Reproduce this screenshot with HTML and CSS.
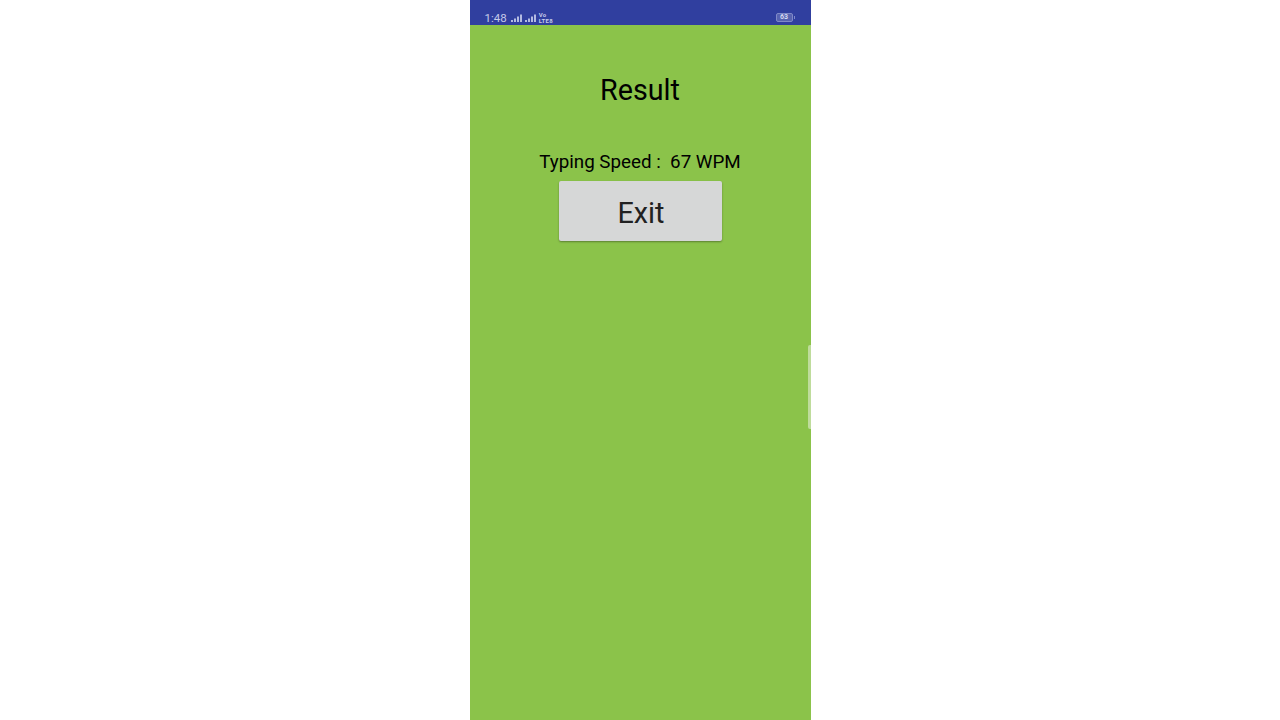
FILE: index.html
```html
<!DOCTYPE html>
<html lang="en">
<head>
    <meta charset="UTF-8">
    <meta name="viewport" content="width=device-width, initial-scale=1.0">
    <title>Result</title>
    <link rel="stylesheet" href="styles.css">
</head>
<body>
    <div class="phone">
        <div class="status-bar">
            <div class="status-left">
                <span class="clock">1:48</span>
                <svg class="signal" width="12" height="8" viewBox="0 0 12 8">
                    <rect x="0" y="6" width="2" height="2"></rect>
                    <rect x="3" y="4.5" width="2" height="3.5"></rect>
                    <rect x="6" y="2.5" width="2" height="5.5"></rect>
                    <rect x="9" y="0.5" width="2" height="7.5"></rect>
                </svg>
                <svg class="signal" width="12" height="8" viewBox="0 0 12 8">
                    <rect x="0" y="6" width="2" height="2"></rect>
                    <rect x="3" y="4.5" width="2" height="3.5"></rect>
                    <rect x="6" y="2.5" width="2" height="5.5"></rect>
                    <rect x="9" y="0.5" width="2" height="7.5"></rect>
                </svg>
                <div class="volte">
                    <span>Vo</span>
                    <span>LTE8</span>
                </div>
            </div>
            <div class="battery">
                <div class="battery-body">63</div>
                <div class="battery-tip"></div>
            </div>
        </div>
        <div class="content">
            <h1 class="title">Result</h1>
            <p class="speed">Typing Speed :&nbsp; 67 WPM</p>
            <button class="exit-btn">Exit</button>
        </div>
        <div class="side-handle"></div>
    </div>
</body>
</html>
```

FILE: styles.css
```css
body {
    margin: 0;
    background: #ffffff;
    font-family: Roboto, "Liberation Sans", sans-serif;
}

.phone {
    position: relative;
    width: 341px;
    height: 720px;
    margin: 0 auto;
    background: #8bc34a;
    overflow: hidden;
}

.status-bar {
    display: flex;
    justify-content: space-between;
    align-items: center;
    height: 25px;
    padding: 10px 16px 0 15px;
    box-sizing: border-box;
    background: #303f9f;
    color: #c5cae9;
}

.status-left {
    display: flex;
    align-items: center;
    gap: 2px;
}

.clock {
    font-size: 11.5px;
    margin-right: 2px;
}

.signal {
    fill: #b4bbe2;
}

.volte {
    display: flex;
    flex-direction: column;
    font-size: 6px;
    font-weight: 700;
    line-height: 5.5px;
    letter-spacing: 0.3px;
}

.battery {
    display: flex;
    align-items: center;
}

.battery-body {
    width: 15px;
    height: 7px;
    border: 1px solid #7f89c8;
    border-radius: 2px;
    background: #5763b0;
    color: #d5d9f0;
    font-size: 7px;
    font-weight: 700;
    line-height: 7px;
    text-align: center;
}

.battery-tip {
    width: 1px;
    height: 3px;
    margin-left: 1px;
    background: #7f89c8;
}

.content {
    display: flex;
    flex-direction: column;
    align-items: center;
}

.title {
    margin: 47px 0 0;
    font-size: 28.7px;
    font-weight: 400;
    line-height: 36px;
    color: #000000;
}

.speed {
    margin: 41px 0 0;
    font-size: 18.8px;
    line-height: 26px;
    color: #000000;
}

.exit-btn {
    width: 163px;
    height: 60px;
    margin-top: 6px;
    padding: 3px 0 0 2px;
    border: none;
    border-radius: 2px;
    background: #d6d7d7;
    box-shadow: 0 1px 2px rgba(0, 0, 0, 0.35);
    color: #212121;
    font-family: inherit;
    font-size: 28.8px;
}

.side-handle {
    position: absolute;
    right: 0;
    top: 345px;
    width: 3px;
    height: 84px;
    border-radius: 2px 0 0 2px;
    background: #bfdc9c;
}
```
